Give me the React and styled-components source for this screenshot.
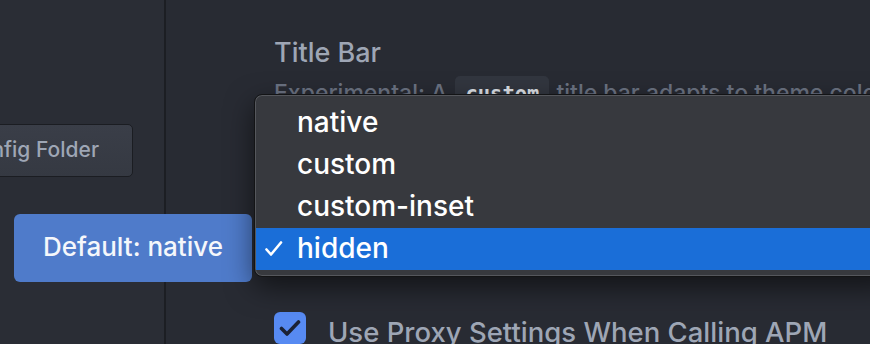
import React from "react";
import styled, { createGlobalStyle } from "styled-components";

const Global = createGlobalStyle`
  html, body { margin: 0; padding: 0; background: #282b33; }
  body { font-family: Inter, "Liberation Sans", sans-serif; }
  * { box-sizing: border-box; }
`;

const Window = styled.div`
  position: relative;
  display: flex;
  width: 870px;
  height: 344px;
  overflow: hidden;
  background: #282b33;
`;

const Sidebar = styled.aside`
  flex: 0 0 166px;
  height: 100%;
  overflow: hidden;
  background: #2a2d35;
  border-right: 2px solid #1c1e23;
  padding-top: 124px;
`;

const SideButton = styled.button`
  display: block;
  margin-left: -110px;
  width: 243px;
  height: 53px;
  border: 1px solid #1b1d22;
  border-radius: 5px;
  background: linear-gradient(#3a3e48, #353942);
  color: #9ea6b5;
  font-family: Inter, "Liberation Sans", sans-serif;
  font-size: 21px;
  font-weight: 500;
  text-align: right;
  padding: 0 33px 2px 0;
  white-space: nowrap;
`;

const Main = styled.main`
  flex: 1;
  min-width: 0;
  padding: 36px 0 0 108px;
  overflow: hidden;
`;

const SettingTitle = styled.div`
  font-size: 27px;
  font-weight: 500;
  line-height: 34px;
  color: #9ea6b5;
  white-space: nowrap;
`;

const Description = styled.div`
  margin-top: 6px;
  font-size: 23px;
  font-weight: 500;
  line-height: 30px;
  color: #6c7383;
  white-space: nowrap;
`;

const Code = styled.code`
  display: inline-block;
  margin: 0 7px 0 8px;
  padding: 0 10px;
  line-height: 36px;
  border-radius: 5px;
  background: #32363f;
  color: #dfe2e8;
  font-family: "DejaVu Sans Mono", "Liberation Mono", monospace;
  font-size: 20.5px;
  font-weight: 700;
`;

const SelectSpace = styled.div`
  height: 200px;
`;

const CheckRow = styled.label`
  display: flex;
  align-items: flex-start;
  gap: 22px;
`;

const CheckBox = styled.span`
  flex: 0 0 32px;
  width: 32px;
  height: 32px;
  border-radius: 6px;
  background: #578af2;
  display: flex;
  align-items: center;
  justify-content: center;
`;

const CheckLabel = styled.span`
  font-size: 27.5px;
  font-weight: 500;
  line-height: 34px;
  margin-top: 3px;
  color: #9ea6b5;
  white-space: nowrap;
`;

const Tooltip = styled.div`
  position: absolute;
  left: 14px;
  top: 214px;
  width: 238px;
  height: 68px;
  border-radius: 6px;
  background: #4f7bca;
  color: #f5f7fb;
  font-size: 26px;
  font-weight: 500;
  display: flex;
  align-items: center;
  justify-content: center;
  padding-bottom: 4px;
`;

const Menu = styled.ul`
  position: absolute;
  left: 254px;
  top: 94px;
  width: 640px;
  height: 183px;
  margin: 0;
  padding: 7px 1px 6px;
  list-style: none;
  border-radius: 8px;
  background: #37393e;
  border: 1px solid #131416;
  box-shadow: inset 0 0 0 1px #55575c, 0 10px 28px rgba(0, 0, 0, 0.55);
`;

const MenuItem = styled.li`
  position: relative;
  height: 42px;
  padding-left: 41px;
  font-size: 28px;
  font-weight: 500;
  line-height: 40px;
  color: #ffffff;
  background: ${(p) => (p.$selected ? "#1a6ed8" : "transparent")};
`;

const Tick = styled.svg`
  position: absolute;
  left: 9px;
  top: 13px;
`;

const items = ["native", "custom", "custom-inset", "hidden"];
const selected = "hidden";

export default function App() {
  return (
    <>
      <Global />
      <Window>
        <Sidebar>
          <SideButton>Open Config Folder</SideButton>
        </Sidebar>
        <Main>
          <SettingTitle>Title Bar</SettingTitle>
          <Description>
            Experimental: A<Code>custom</Code>title bar adapts to theme colors.
          </Description>
          <SelectSpace />
          <CheckRow>
            <CheckBox>
              <svg width="22" height="18" viewBox="0 0 22 18">
                <path d="M2.5 9.5 L8 15 L19.5 3" fill="none" stroke="#1b2235" strokeWidth="3.6" strokeLinecap="round" strokeLinejoin="round" />
              </svg>
            </CheckBox>
            <CheckLabel>Use Proxy Settings When Calling APM</CheckLabel>
          </CheckRow>
        </Main>
        <Tooltip>Default: native</Tooltip>
        <Menu>
          {items.map((it) => (
            <MenuItem key={it} $selected={it === selected}>
              {it === selected && (
                <Tick width="18" height="16" viewBox="0 0 18 16">
                  <path d="M1.5 8.5 L6 13.5 L16 1.5" fill="none" stroke="#fff" strokeWidth="2.6" strokeLinecap="round" strokeLinejoin="round" />
                </Tick>
              )}
              {it}
            </MenuItem>
          ))}
        </Menu>
      </Window>
    </>
  );
}
